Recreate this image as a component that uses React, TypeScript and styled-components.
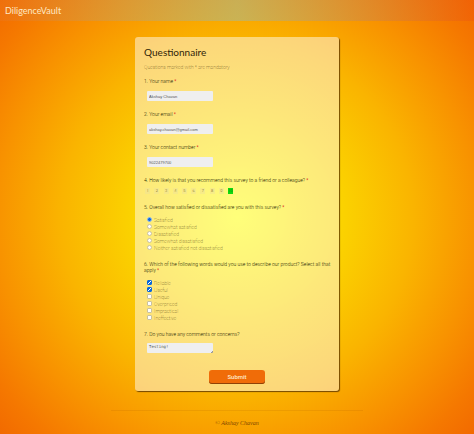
import React from 'react';
import styled, { createGlobalStyle } from 'styled-components';

const GlobalStyle = createGlobalStyle`
  * { box-sizing: border-box; }
  body {
    margin: 0;
    color: #241c00;
    font: 300 5px/6px Roboto, sans-serif;
  }
`;

const Page = styled.div`
  display: flex;
  flex-direction: column;
  align-items: center;
  min-height: 100vh;
  background: radial-gradient(circle at center, #ffff00 0%, #fbd200 33%, #fab400 55%, #f89200 75%, #f57800 90%, #f26a00 100%);
`;

const Header = styled.header`
  display: flex;
  align-items: center;
  width: 100%;
  height: 21px;
  padding: 0 5px;
  background: linear-gradient(90deg, rgba(235, 120, 30, 0.4), rgba(170, 185, 140, 0.6) 50%, rgba(240, 90, 10, 0.5));
`;

const Brand = styled.a`
  color: #ffe9c4;
  font: 400 9px/12px Lato, sans-serif;
  text-decoration: none;
`;

const Card = styled.form`
  display: flex;
  flex-direction: column;
  width: 43%;
  margin-top: 16px;
  padding: 9px 9px 7px;
  border-radius: 3px;
  background: rgba(255, 255, 255, 0.48);
  box-shadow: 1px 1px 1px rgba(80, 45, 0, 0.8);
`;

const Title = styled.h1`
  margin: 0;
  color: #302408;
  font: 400 10px/12px Lato, sans-serif;
`;

const Intro = styled.p`
  margin: 6px 0 8px;
  color: #3d3108;
  font-weight: 100;
`;

const Questions = styled.div`
  display: flex;
  flex-direction: column;
  gap: 10px;
  margin-right: -5px;
`;

const Question = styled.fieldset`
  min-width: 0;
  margin: 0;
  padding: 0;
  border: 0;
`;

const Legend = styled.legend`
  padding: 0;
`;

const Prompt = styled.label`
  display: block;
`;

const Required = styled.span`
  color: #e0261a;
  font-weight: 400;
`;

const TextField = styled.input`
  display: block;
  width: 66px;
  height: 10px;
  margin: 7px 0 0 3px;
  padding: 0 2px;
  border: 0;
  border-radius: 1px;
  background: #efefef;
  color: #555;
  font: 4px/6px "Liberation Sans", sans-serif;
`;

const Comments = styled.textarea`
  display: block;
  width: 66px;
  height: 10px;
  margin: 6px 0 0 3px;
  padding: 0 2px;
  border: 0;
  border-radius: 1px;
  background: linear-gradient(135deg, #efefef 97%, #999 97%);
  color: #555;
  font: 4px/8px "DejaVu Sans Mono", monospace;
  text-rendering: geometricPrecision;
  overflow: hidden;
  resize: none;
`;

const Scale = styled.div`
  display: flex;
  justify-content: space-between;
  width: 89px;
  padding: 5px 0 0 1px;
`;

const ScaleButton = styled.button<{ $active: boolean }>`
  width: 5px;
  height: 6px;
  padding: 0;
  border: 0;
  background: ${p => (p.$active ? '#10d810' : 'rgba(240, 225, 150, 0.5)')};
  color: ${p => (p.$active ? '#087808' : '#75652a')};
  font: 300 4px/6px Roboto, sans-serif;
`;

const Options = styled.div`
  display: flex;
  flex-direction: column;
  padding: 6px 0 0 3px;
`;

const Option = styled.label`
  display: flex;
  align-items: center;
  gap: 2px;
  height: 7px;
  color: #3d3108;
  font-weight: 100;
`;

const Choice = styled.input`
  appearance: none;
  width: 5px;
  height: 5px;
  margin: 0;
  border: 1px solid #c9c2a0;
  border-radius: 1px;
  background: #fff;

  &[type='radio'] { border-radius: 50%; }
  &[type='radio']:checked { border-color: #8db8ee; background: #0b68dc; }
  &[type='checkbox']:checked {
    border-color: #0b68dc;
    background: linear-gradient(135deg, #0b68dc 40%, #fff 40%, #fff 60%, #0b68dc 60%);
  }
`;

const Submit = styled.button`
  align-self: center;
  width: 56px;
  height: 14px;
  margin-top: 17px;
  padding: 0;
  border: 0;
  border-radius: 3px;
  background: #f06c08;
  box-shadow: inset 0 -1px 0 #8f4206;
  color: #ffe8c8;
  font: 500 6px/12px Roboto, sans-serif;
`;

const Footer = styled.footer`
  width: 53%;
  margin-top: 19px;
  padding-top: 8px;
  border-top: 1px solid rgba(170, 90, 0, 0.15);
  color: #814600;
  font: italic 6px/8px "Liberation Serif", serif;
  text-align: center;
`;

const fields = [
  { id: 'name', text: '1. Your name', value: 'Akshay Chavan', type: 'text' },
  { id: 'email', text: '2. Your email', value: 'akshay.chavan@gmail.com', type: 'email' },
  { id: 'phone', text: '3. Your contact number', value: '9022479700', type: 'tel' },
];
const satisfaction = ['Satisfied', 'Somewhat satisfied', 'Dissatisfied', 'Somewhat dissatisfied', 'Neither satisfied not dissatisfied'];
const words = ['Reliable', 'Useful', 'Unique', 'Overpriced', 'Impractical', 'Ineffective'];

export default function App() {
  const [score, setScore] = React.useState(10);
  return (
    <>
      <GlobalStyle />
      <Page>
        <Header><Brand href="#">DiligenceVault</Brand></Header>
        <Card onSubmit={e => e.preventDefault()}>
          <Title>Questionnaire</Title>
          <Intro>Questions marked with * are mandatory</Intro>
          <Questions>
            {fields.map(f => (
              <Question as="div" key={f.id}>
                <Prompt htmlFor={f.id}>{f.text} <Required>*</Required></Prompt>
                <TextField id={f.id} type={f.type} defaultValue={f.value} />
              </Question>
            ))}
            <Question>
              <Legend>4. How likely is that you recommend this survey to a friend or a colleague? <Required>*</Required></Legend>
              <Scale>
                {Array.from({ length: 10 }, (_, i) => i + 1).map(n => (
                  <ScaleButton key={n} type="button" $active={n === score} aria-pressed={n === score} onClick={() => setScore(n)}>{n}</ScaleButton>
                ))}
              </Scale>
            </Question>
            <Question>
              <Legend>5. Overall how satisfied or dissatisfied are you with this survey? <Required>*</Required></Legend>
              <Options>
                {satisfaction.map((s, i) => (
                  <Option key={s}><Choice type="radio" name="satisfaction" defaultChecked={i === 0} />{s}</Option>
                ))}
              </Options>
            </Question>
            <Question>
              <Legend>6. Which of the following words would you use to describe our product? Select all that apply <Required>*</Required></Legend>
              <Options>
                {words.map((w, i) => (
                  <Option key={w}><Choice type="checkbox" defaultChecked={i < 2} />{w}</Option>
                ))}
              </Options>
            </Question>
            <Question as="div">
              <Prompt htmlFor="comments">7. Do you have any comments or concerns?</Prompt>
              <Comments id="comments" defaultValue="Testing!" />
            </Question>
          </Questions>
          <Submit type="submit">Submit</Submit>
        </Card>
        <Footer>© Akshay Chavan</Footer>
      </Page>
    </>
  );
}
